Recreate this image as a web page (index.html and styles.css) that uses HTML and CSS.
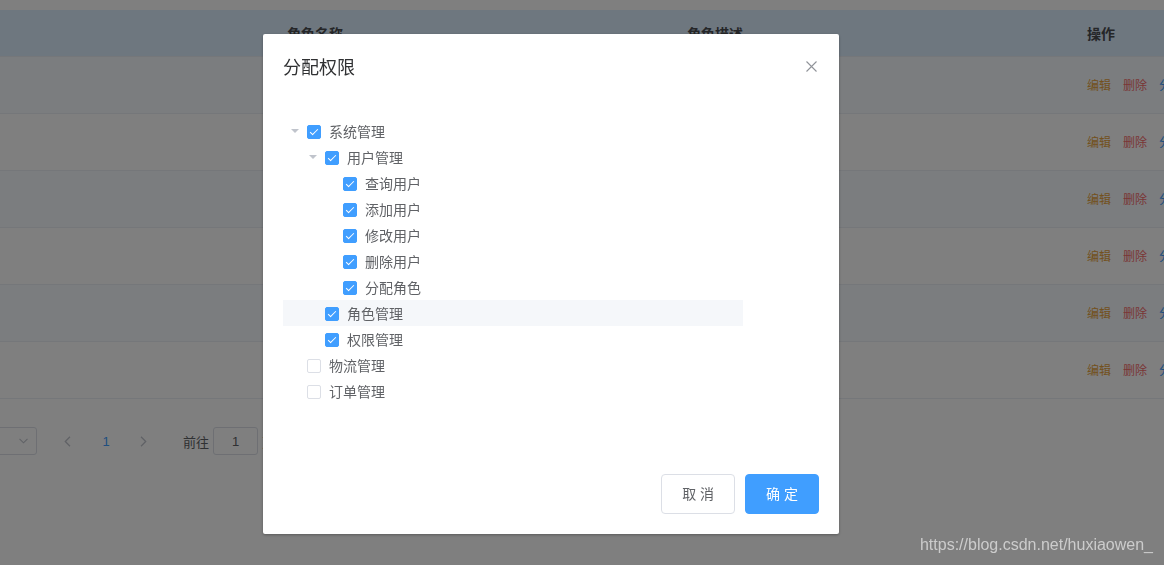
FILE: index.html
```html
<!DOCTYPE html>
<html lang="zh-CN">
<head>
<meta charset="utf-8">
<title>分配权限</title>
<link rel="stylesheet" href="styles.css">
</head>
<body>
<div class="page">
  <div class="table">
    <div class="tr th">
      <div class="cell"></div>
      <div class="cell">角色名称</div>
      <div class="cell">角色描述</div>
      <div class="cell">操作</div>
    </div>
    <div class="tr stripe">
      <div class="cell"></div><div class="cell">超级管理员</div><div class="cell">管理</div>
      <div class="cell actions"><span class="act edit">编辑</span><span class="act del">删除</span><span class="act assign">分配权限</span></div>
    </div>
    <div class="tr">
      <div class="cell"></div><div class="cell">管理员</div><div class="cell">管理</div>
      <div class="cell actions"><span class="act edit">编辑</span><span class="act del">删除</span><span class="act assign">分配权限</span></div>
    </div>
    <div class="tr stripe">
      <div class="cell"></div><div class="cell">测试</div><div class="cell">测试</div>
      <div class="cell actions"><span class="act edit">编辑</span><span class="act del">删除</span><span class="act assign">分配权限</span></div>
    </div>
    <div class="tr">
      <div class="cell"></div><div class="cell">运营</div><div class="cell">运营</div>
      <div class="cell actions"><span class="act edit">编辑</span><span class="act del">删除</span><span class="act assign">分配权限</span></div>
    </div>
    <div class="tr stripe">
      <div class="cell"></div><div class="cell">客服</div><div class="cell">客服</div>
      <div class="cell actions"><span class="act edit">编辑</span><span class="act del">删除</span><span class="act assign">分配权限</span></div>
    </div>
    <div class="tr">
      <div class="cell"></div><div class="cell">财务</div><div class="cell">财务</div>
      <div class="cell actions"><span class="act edit">编辑</span><span class="act del">删除</span><span class="act assign">分配权限</span></div>
    </div>
  </div>

  <div class="pagination">
    <div class="sizes">
      <span class="sizes-text">10条/页</span>
      <svg class="chev" width="9" height="6" viewBox="0 0 9 6"><polyline points="0.5,0.8 4.5,4.8 8.5,0.8" fill="none" stroke="#c0c4cc" stroke-width="1.1"/></svg>
    </div>
    <span class="pbtn"><svg width="7" height="11" viewBox="0 0 7 11"><polyline points="6,0.8 1.3,5.5 6,10.2" fill="none" stroke="#c0c4cc" stroke-width="1.3"/></svg></span>
    <span class="pbtn num">1</span>
    <span class="pbtn"><svg width="7" height="11" viewBox="0 0 7 11"><polyline points="1,0.8 5.7,5.5 1,10.2" fill="none" stroke="#c0c4cc" stroke-width="1.3"/></svg></span>
    <span class="jumper">前往<span class="jinput">1</span>页</span>
  </div>
</div>

<div class="mask"></div>

<div class="dialog">
  <div class="dlg-header">
    <span class="dlg-title">分配权限</span>
    <span class="dlg-close"><svg width="11" height="11" viewBox="0 0 11 11"><path d="M0.5 0.5 L10.5 10.5 M10.5 0.5 L0.5 10.5" stroke="#909399" stroke-width="1.1"/></svg></span>
  </div>
  <div class="dlg-body">
    <div class="tree">
      <div class="node lv1"><span class="caret open"></span><span class="cb on"></span><span class="label">系统管理</span></div>
      <div class="node lv2"><span class="caret open"></span><span class="cb on"></span><span class="label">用户管理</span></div>
      <div class="node lv3"><span class="caret"></span><span class="cb on"></span><span class="label">查询用户</span></div>
      <div class="node lv3"><span class="caret"></span><span class="cb on"></span><span class="label">添加用户</span></div>
      <div class="node lv3"><span class="caret"></span><span class="cb on"></span><span class="label">修改用户</span></div>
      <div class="node lv3"><span class="caret"></span><span class="cb on"></span><span class="label">删除用户</span></div>
      <div class="node lv3"><span class="caret"></span><span class="cb on"></span><span class="label">分配角色</span></div>
      <div class="node lv2 current"><span class="caret"></span><span class="cb on"></span><span class="label">角色管理</span></div>
      <div class="node lv2"><span class="caret"></span><span class="cb on"></span><span class="label">权限管理</span></div>
      <div class="node lv1"><span class="caret"></span><span class="cb"></span><span class="label">物流管理</span></div>
      <div class="node lv1"><span class="caret"></span><span class="cb"></span><span class="label">订单管理</span></div>
    </div>
  </div>
  <div class="dlg-footer">
    <button class="btn">取 消</button>
    <button class="btn primary">确 定</button>
  </div>
</div>

<div class="watermark">https://blog.csdn.net/huxiaowen_</div>
</body>
</html>
```

FILE: styles.css
```css
html, body {
  margin: 0;
  padding: 0;
}
body {
  width: 1164px;
  height: 565px;
  overflow: hidden;
  background: #ffffff;
  font-family: "Liberation Sans", "Noto Sans CJK SC", sans-serif;
  color: #606266;
  position: relative;
}

/* ---------- background page ---------- */
.page {
  width: 1600px;
  margin-left: -123px;
  padding-top: 10px;
}
.table {
  display: flex;
  flex-direction: column;
}
.tr {
  display: grid;
  grid-template-columns: 400px 400px 400px 400px;
  height: 57px;
  box-sizing: border-box;
  border-bottom: 1px solid #ebeef5;
  align-items: center;
  font-size: 14px;
  line-height: 23px;
}
.tr.th {
  height: 47px;
  background: #dceeff;
  font-weight: bold;
  color: #4a4c50;
  padding-top: 2px;
}
.tr.stripe {
  background: #f6fbff;
}
.cell {
  padding: 0 10px;
}
.actions {
  display: flex;
  gap: 12px;
  font-size: 12px;
  padding-top: 3px;
}
.act.edit { color: #e6a23c; }
.act.del { color: #f56c6c; }
.act.assign { color: #409eff; }

.pagination {
  display: flex;
  align-items: center;
  height: 28px;
  margin-top: 28px;
  padding-left: 60px;
  font-size: 13px;
  color: #303133;
}
.sizes {
  width: 100px;
  height: 28px;
  box-sizing: border-box;
  border: 1px solid #dcdfe6;
  border-radius: 3px;
  display: flex;
  align-items: center;
  justify-content: flex-end;
  padding-right: 8px;
  margin-right: 11px;
  color: #606266;
}
.sizes-text {
  margin-right: 19px;
}
.pbtn {
  width: 38px;
  height: 28px;
  display: flex;
  align-items: center;
  justify-content: center;
}
.pbtn.num {
  color: #409eff;
  font-size: 13px;
  padding-left: 2px;
  box-sizing: border-box;
}
.jumper {
  display: flex;
  align-items: center;
  margin-left: 21px;
  color: #606266;
}
.jinput {
  width: 45px;
  height: 28px;
  box-sizing: border-box;
  margin: 0 4px;
  border: 1px solid #dcdfe6;
  border-radius: 3px;
  display: flex;
  align-items: center;
  justify-content: center;
  color: #606266;
}

/* ---------- modal ---------- */
.mask {
  position: fixed;
  inset: 0;
  background: rgba(0, 0, 0, 0.5);
}
.dialog {
  position: fixed;
  left: 263px;
  top: 34px;
  width: 576px;
  background: #ffffff;
  border-radius: 2px;
  box-shadow: 0 1px 3px rgba(0, 0, 0, 0.3);
}
.dlg-header {
  display: flex;
  align-items: center;
  justify-content: space-between;
  padding: 20px 20px 10px;
}
.dlg-title {
  font-size: 18px;
  line-height: 20px;
  padding-top: 4px;
  color: #303133;
}
.dlg-close {
  width: 16px;
  height: 16px;
  display: flex;
  align-items: center;
  justify-content: center;
}
.dlg-body {
  padding: 30px 20px 60px;
}
.tree {
  width: 460px;
  font-size: 14px;
  color: #606266;
}
.node {
  height: 26px;
  display: flex;
  align-items: center;
}
.node.lv2 { padding-left: 18px; }
.node.lv3 { padding-left: 36px; }
.node.current { background: #f5f7fa; }
.caret {
  width: 24px;
  height: 24px;
  display: flex;
  align-items: center;
  justify-content: center;
}
.caret.open::before {
  content: "";
  width: 0;
  height: 0;
  border-left: 4px solid transparent;
  border-right: 4px solid transparent;
  border-top: 4.5px solid #c0c4cc;
}
.cb {
  width: 14px;
  height: 14px;
  box-sizing: border-box;
  border: 1px solid #dcdfe6;
  border-radius: 2px;
  background: #ffffff;
  margin-right: 8px;
  margin-top: 1px;
  position: relative;
  flex: none;
}
.cb.on {
  background: #409eff;
  border-color: #409eff;
}
.cb.on::after {
  content: "";
  position: absolute;
  left: 4px;
  top: 1px;
  width: 3px;
  height: 7px;
  border: 1px solid #ffffff;
  border-left: 0;
  border-top: 0;
  transform: rotate(45deg);
}
.label {
  line-height: 23px;
  padding-top: 3px;
}
.dlg-footer {
  display: flex;
  justify-content: flex-end;
  gap: 10px;
  padding: 10px 20px 20px;
}
.btn {
  height: 40px;
  padding: 0 20px;
  font-family: "Liberation Sans", "Noto Sans CJK SC", sans-serif;
  font-size: 14px;
  line-height: 14px;
  border: 1px solid #dcdfe6;
  border-radius: 4px;
  background: #ffffff;
  color: #606266;
}
.btn.primary {
  background: #409eff;
  border-color: #409eff;
  color: #ffffff;
}

.watermark {
  position: absolute;
  right: 11px;
  bottom: 10px;
  font-family: "Liberation Sans", sans-serif;
  font-size: 16px;
  line-height: 20px;
  color: #cccccc;
}
```
